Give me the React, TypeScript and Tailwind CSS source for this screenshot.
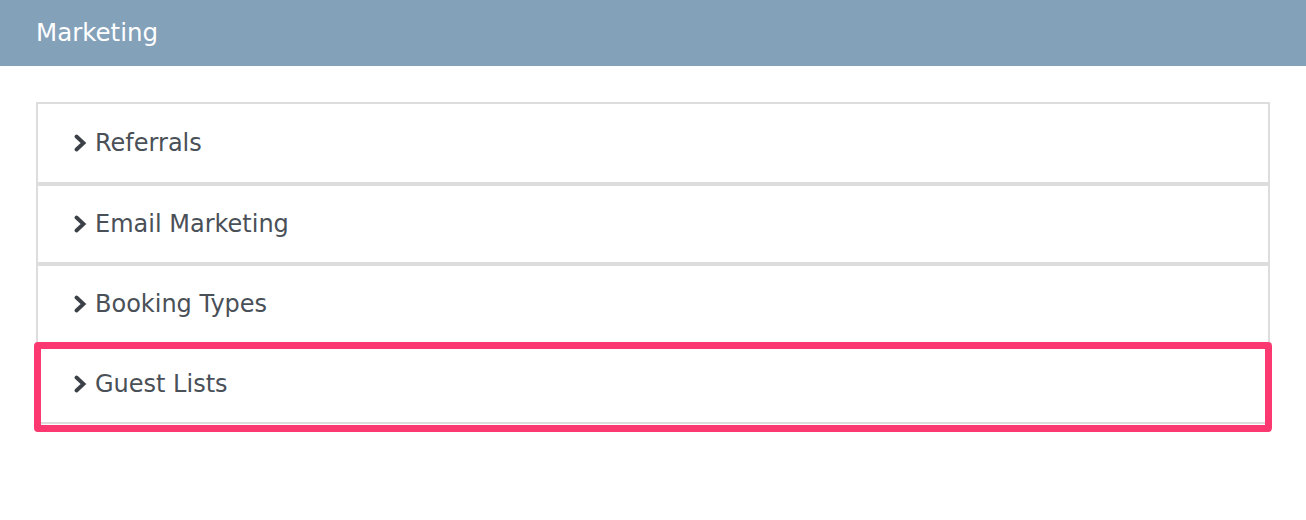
import React from 'react';

const items = ['Referrals', 'Email Marketing', 'Booking Types', 'Guest Lists'];

function Chevron() {
  return (
    <svg width="14" height="18" viewBox="0 0 14 18" className="shrink-0">
      <polyline
        points="3.5,2.5 10.5,9 3.5,15.5"
        fill="none"
        stroke="#3b4147"
        strokeWidth="3.8"
        strokeLinecap="round"
        strokeLinejoin="miter"
      />
    </svg>
  );
}

export default function App() {
  return (
    <div className="min-h-[520px] bg-white font-['DejaVu_Sans',sans-serif]">
      {/* Header */}
      <div className="h-[66px] bg-[#84a1ba] px-[36px] flex items-center">
        <h1 className="text-[24.5px] text-white">Marketing</h1>
      </div>

      {/* Accordion list */}
      <div className="px-[36px] pt-[36px]">
        <div className="w-[1234px]">
          {items.map((label, i) => (
            <div
              key={label}
              className={`relative flex items-center gap-[8px] border-2 border-[#dddddd] pl-[35px] ${
                i === 0 ? 'h-[82px]' : 'h-[80px]'
              }`}
            >
              <Chevron />
              <span className="text-[24px] text-[#4a5057]">{label}</span>
              {label === 'Guest Lists' && (
                <div className="absolute left-[-4px] right-[-4px] top-[-4px] bottom-[-10px] border-[7px] border-[#fc3870] rounded-[4px]" />
              )}
            </div>
          ))}
        </div>
      </div>
    </div>
  );
}
